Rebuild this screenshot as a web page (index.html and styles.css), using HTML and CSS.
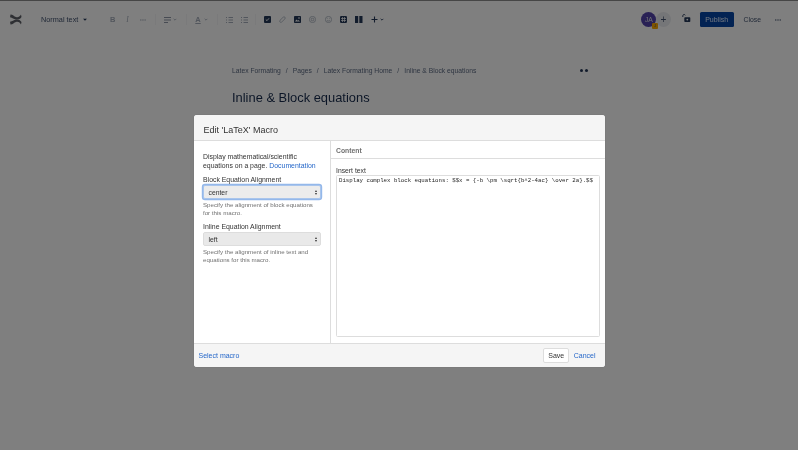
FILE: index.html
```html
<!DOCTYPE html>
<html lang="en">
<head>
<meta charset="utf-8">
<title>Edit LaTeX Macro</title>
<link rel="stylesheet" href="styles.css">
</head>
<body>
<div class="page">
  <header class="toolbar">
    <svg class="logo" width="12" height="11" viewBox="0 0 12 11"><path d="M.5 .5c2.500 0 3.500 2 5.500 2.500s3.500 0 5-2.500l.5 2.500C10.500 5 8 5.700 6 5.500 3.500 5.200 2.500 3.500 0 3.200z" fill="#5c5f66"/><path d="M.5 10.500c2.500 0 3.500-2 5.500-2.500s3.500 0 5 2.500l.5-2.500C10.500 6 8 5.300 6 5.500 3.500 5.800 2.500 7.500 0 7.800z" fill="#5c5f66"/></svg>
    <span class="style-select">Normal text</span>
    <svg class="chev" width="4" height="3" viewBox="0 0 6 4"><path d="M1 .8l2 2 2-2" fill="none" stroke="#253858" stroke-width="1.600"/></svg>
    <div class="group group-format">
      <span class="t-icon bold">B</span>
      <span class="t-icon italic">I</span>
      <svg class="icon" width="6" height="6" viewBox="0 0 6 6"><path d="M0 3h6" stroke="#a5adba" stroke-dasharray="1.500 .7"/></svg>
    </div>
    <i class="sep"></i>
    <div class="group group-align">
      <svg class="icon" width="7" height="6" viewBox="0 0 7 6"><path d="M0 .5h7M0 3h7M0 5.500h4" stroke="#8f97a6"/></svg>
      <svg class="chev" width="4" height="3" viewBox="0 0 6 4"><path d="M1 1l2 2 2-2" fill="none" stroke="#a5adba" stroke-width="1.300"/></svg>
    </div>
    <i class="sep"></i>
    <div class="group group-color">
      <span class="t-icon color">A</span>
      <svg class="chev" width="4" height="3" viewBox="0 0 6 4"><path d="M1 1l2 2 2-2" fill="none" stroke="#a5adba" stroke-width="1.300"/></svg>
    </div>
    <i class="sep"></i>
    <div class="group group-lists">
      <svg class="icon" width="7" height="6" viewBox="0 0 7 6"><path d="M0 .5h1M2.500 .5H7M0 3h1M2.500 3H7M0 5.500h1M2.500 5.500H7" stroke="#a5adba"/></svg>
      <svg class="icon" width="7" height="6" viewBox="0 0 7 6"><path d="M0 .5h1M2.500 .5H7M0 3h1M2.500 3H7M0 5.500h1M2.500 5.500H7" stroke="#a5adba"/></svg>
    </div>
    <i class="sep"></i>
    <div class="group group-insert">
      <svg class="icon" width="7" height="7" viewBox="0 0 7 7"><rect width="7" height="7" rx="1" fill="#253858"/><path d="M1.800 3.500l1.200 1.200 2-2.400" fill="none" stroke="#fff" stroke-width=".9"/></svg>
      <svg class="icon" width="7" height="7" viewBox="0 0 7 7"><path d="M1 6a1.200 1.200 0 0 1 0-1.700L4.200 1.200a1.200 1.200 0 0 1 1.700 1.700L2.700 6A1.200 1.200 0 0 1 1 6z" fill="none" stroke="#a5adba" stroke-width=".8"/></svg>
      <svg class="icon" width="7" height="7" viewBox="0 0 7 7"><rect width="7" height="7" rx=".8" fill="#253858"/><path d="M1 5.500l1.500-2 1.200 1.200.8-.8L6 5.500z" fill="#fff"/><circle cx="5" cy="2" r=".8" fill="#fff"/></svg>
      <svg class="icon" width="7" height="7" viewBox="0 0 7 7"><circle cx="3.500" cy="3.500" r="3.100" fill="none" stroke="#a5adba" stroke-width=".8"/><circle cx="3.500" cy="3.500" r="1.300" fill="none" stroke="#a5adba" stroke-width=".8"/></svg>
      <svg class="icon" width="7" height="7" viewBox="0 0 7 7"><circle cx="3.500" cy="3.500" r="3.100" fill="none" stroke="#a5adba" stroke-width=".8"/><path d="M2 4.300c.8.900 2.200.9 3 0M2.300 2.600h.6M4.100 2.600h.6" fill="none" stroke="#a5adba" stroke-width=".8"/></svg>
      <svg class="icon" width="7" height="7" viewBox="0 0 7 7"><rect width="7" height="7" rx="1.200" fill="#253858"/><path d="M2.500 1v5M4.500 1v5M1 2.500h5M1 4.500h5" stroke="#fff" stroke-width=".7"/></svg>
      <svg class="icon" width="7.500" height="7" viewBox="0 0 7.500 7"><rect width="3.200" height="7" fill="#253858"/><rect x="4.300" width="3.200" height="7" fill="#253858"/></svg>
      <span class="plus-pair">
        <svg class="icon" width="7" height="7" viewBox="0 0 7 7"><path d="M3.500 .5v6M.5 3.500h6" stroke="#253858" stroke-width="1.100"/></svg>
        <svg class="chev" width="4" height="3" viewBox="0 0 6 4"><path d="M1 1l2 2 2-2" fill="none" stroke="#253858" stroke-width="1.300"/></svg>
      </span>
    </div>
    <div class="actions">
      <span class="people">
        <span class="avatar">JA<b class="badge">J</b></span>
        <span class="add">+</span>
      </span>
      <svg class="lock" width="8.500" height="8" viewBox="0 0 8.500 8"><path d="M.8 3V1.800A1.300 1.300 0 0 1 3.300 1.300" fill="none" stroke="#253858" stroke-width=".9"/><rect x="2.300" y="3.200" width="6" height="4.800" rx=".8" fill="#253858"/><circle cx="5.300" cy="5.600" r=".9" fill="#fff"/></svg>
      <span class="publish">Publish</span>
      <span class="close">Close</span>
      <svg class="more" width="6" height="2" viewBox="0 0 6 2"><circle cx=".8" cy="1" r=".7" fill="#42526e"/><circle cx="3" cy="1" r=".7" fill="#42526e"/><circle cx="5.200" cy="1" r=".7" fill="#42526e"/></svg>
    </div>
  </header>
  <main class="content">
    <div class="crumb-row">
      <nav class="crumbs"><span>Latex Formating</span><i>/</i><span>Pages</span><i>/</i><span>Latex Formating Home</span><i>/</i><span>Inline &amp; Block equations</span></nav>
      <span class="dots"></span>
    </div>
    <h1>Inline &amp; Block equations</h1>
  </main>
</div>
<div class="blanket"></div>
<section class="dialog">
  <h2 class="dialog-head">Edit 'LaTeX' Macro</h2>
  <div class="dialog-body">
    <aside class="params">
      <p class="intro">Display mathematical/scientific equations on a page. <a>Documentation</a></p>
      <label class="field-label">Block Equation Alignment</label>
      <div class="select focused"><span>center</span><span class="updown"></span></div>
      <p class="hint">Specify the alignment of block equations for this macro.</p>
      <label class="field-label">Inline Equation Alignment</label>
      <div class="select"><span>left</span><span class="updown"></span></div>
      <p class="hint">Specify the alignment of inline text and equations for this macro.</p>
    </aside>
    <div class="editor">
      <div class="editor-head">Content</div>
      <div class="editor-main">
        <label class="insert-label">Insert text</label>
        <div class="textarea">Display complex block equations: $$x = {-b \pm \sqrt{b^2-4ac} \over 2a}.$$</div>
      </div>
    </div>
  </div>
  <footer class="dialog-foot">
    <a>Select macro</a>
    <span class="foot-right"><span class="save">Save</span><a>Cancel</a></span>
  </footer>
</section>
</body>
</html>
```

FILE: styles.css
```css
html, body { margin: 0; padding: 0; width: 798px; height: 450px; overflow: hidden; background: #fff; }
body { font-family: "Liberation Sans", Arial, sans-serif; color: #172b4d; position: relative; }
.page { height: 450px; border-top: 1px solid #8c8c8c; box-sizing: border-box; filter: blur(.55px); }
.toolbar { display: flex; align-items: center; height: 37px; padding-left: 9.500px; }
.logo { flex: none; margin-right: 19.500px; }
.style-select { font-size: 7.300px; color: #42526e; width: 42px; flex: none; white-space: nowrap; }
.group { display: flex; align-items: center; flex: none; }
.icon { flex: none; display: block; }
.chev { flex: none; display: block; }
.sep { flex: none; width: 1px; height: 11px; background: #f4f5f7; }
.group-format { gap: 11px; margin-left: 23px; }
.group-format + .sep { margin-left: 8.500px; }
.t-icon { display: block; font-size: 7.500px; color: #a5adba; line-height: 9px; text-align: center; }
.bold { width: 5px; font-weight: 700; }
.italic { width: 3px; font-style: italic; font-family: "Liberation Serif", serif; }
.group-align { margin-left: 8px; gap: 2px; }
.group-align + .sep { margin-left: 9.500px; }
.group-color { margin-left: 8px; gap: 3px; }
.group-color .color { width: 6px; text-decoration: underline; font-weight: 700; }
.group-color + .sep { margin-left: 8.500px; }
.group-lists { margin-left: 8px; gap: 8px; }
.group-lists + .sep { margin-left: 7px; }
.group-insert { margin-left: 8px; gap: 8.300px; }
.plus-pair { display: flex; align-items: center; gap: 2px; }
.actions { display: flex; align-items: center; margin-left: auto; flex: none; }
.people { display: flex; align-items: center; }
.avatar { position: relative; width: 15px; height: 15px; border-radius: 50%; background: #5243aa; color: #dfe1e6; font-size: 6.800px; display: flex; align-items: center; justify-content: center; z-index: 1; }
.badge { position: absolute; right: -1.500px; bottom: -1.500px; width: 6px; height: 6px; border-radius: 1px; background: #ffab00; font-size: 4px; line-height: 6px; text-align: center; font-weight: 400; color: #42526e; }
.add { width: 15px; height: 15px; margin-left: -.6px; border-radius: 50%; background: #ebecf0; color: #42526e; font-size: 10px; line-height: 15px; text-align: center; }
.lock { flex: none; margin-left: 11.300px; margin-bottom: 3px; }
.publish { margin-left: 9px; width: 34px; height: 15px; background: #0747a6; color: #deebff; font-size: 7px; line-height: 15px; text-align: center; border-radius: 1.500px; }
.close { margin-left: 10px; font-size: 6.800px; color: #42526e; }
.more { flex: none; margin-left: 14px; margin-right: 17px; }
.content { width: 358px; margin-left: 232px; }
.crumb-row { display: flex; align-items: center; justify-content: space-between; margin-top: 27.500px; }
.crumbs { display: flex; gap: 5px; font-size: 6.750px; color: #5e6c84; line-height: 9px; }
.crumbs i { font-style: normal; }
.dots { width: 3px; height: 3px; border-radius: 50%; background: #253858; box-shadow: 5px 0 0 #253858; margin-right: 7px; }
h1 { margin: 14.500px 0 0; font-size: 12.900px; line-height: 18px; font-weight: 400; color: #172b4d; }
.blanket { position: absolute; inset: 0; background: rgba(0, 0, 0, .5); }
.dialog { position: absolute; left: 193.500px; top: 115px; width: 411.500px; height: 252px; background: #fff; border-radius: 3px; display: flex; flex-direction: column; color: #333; box-shadow: 0 0 1px rgba(0, 0, 0, .3); overflow: hidden; filter: blur(.25px); }
.dialog-head { flex: none; margin: 0; height: 26px; box-sizing: border-box; padding-left: 10px; background: #f5f5f5; border-bottom: 1px solid #ddd; font-size: 9px; line-height: 30px; font-weight: 400; }
.dialog-body { flex: 1; display: flex; min-height: 0; }
.params { flex: none; width: 137px; box-sizing: border-box; border-right: 1px solid #ddd; padding: 11px 8.500px 0 9.500px; font-size: 6.900px; }
.intro { margin: 0 0 5px; line-height: 9px; color: #333; }
a { color: #2567c9; }
.field-label { display: block; font-size: 6.900px; line-height: 10px; color: #333; }
.select { display: flex; align-items: center; justify-content: space-between; box-sizing: border-box; height: 14px; padding: 0 3px 0 4.500px; background: #e9e9e9; border-radius: 2px; font-size: 6.800px; color: #333; border: .5px solid #ddd; }
.select.focused { background: #ececec; border-color: #a9c5ec; box-shadow: 0 0 0 1.200px #94b8ea; }
.updown { width: 0; height: 0; position: relative; border-left: 1.500px solid transparent; border-right: 1.500px solid transparent; border-bottom: 2.500px solid #333; margin-bottom: 3px; }
.updown::after { content: ""; position: absolute; left: -1.500px; top: 3.500px; border-left: 1.500px solid transparent; border-right: 1.500px solid transparent; border-top: 2.500px solid #333; }
.hint { margin: 2px 0 4.200px; font-size: 6.150px; line-height: 8.400px; color: #707070; }
.editor { flex: 1; display: flex; flex-direction: column; min-width: 0; }
.editor-head { flex: none; height: 18px; box-sizing: border-box; border-bottom: 1px solid #ddd; padding-left: 5.500px; font-size: 6.800px; line-height: 19px; font-weight: 700; color: #707070; }
.editor-main { flex: 1; min-height: 0; display: flex; flex-direction: column; padding: 7px 5px 6px 5.500px; }
.insert-label { font-size: 6.800px; line-height: 9px; color: #333; }
.textarea { flex: 1; border: 1px solid #ddd; border-radius: 1.500px; padding: 1px 2px; font-family: "Liberation Mono", monospace; font-size: 5.730px; line-height: 8px; color: #222; white-space: nowrap; }
.dialog-foot { flex: none; height: 24px; box-sizing: border-box; background: #f5f5f5; border-top: 1px solid #ddd; display: flex; align-items: center; justify-content: space-between; padding: 0 9.500px 0 5px; font-size: 7px; }
.foot-right { display: flex; align-items: center; gap: 4.500px; }
.save { width: 26px; height: 15px; box-sizing: border-box; border: 1px solid #ddd; border-radius: 2px; background: #fff; color: #333; text-align: center; line-height: 13px; }
```
